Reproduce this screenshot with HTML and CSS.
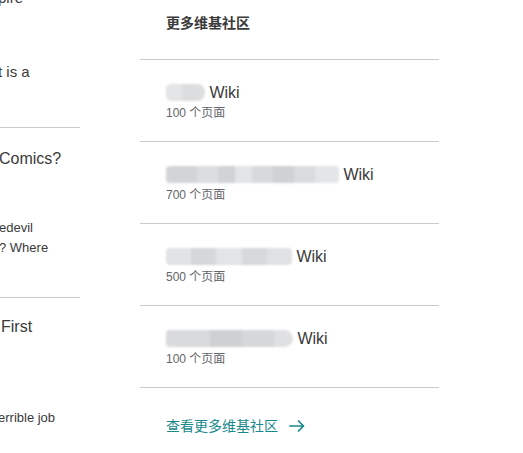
FILE: index.html
```html
<!DOCTYPE html>
<html lang="zh">
<head>
<meta charset="utf-8">
<title>更多维基社区</title>
<link rel="stylesheet" href="styles.css">
</head>
<body>
<div class="page">
  <div class="feed">
    <div class="card card-1">
      <div class="card-title first">pire</div>
      <div class="card-text gap-1">t is a</div>
    </div>
    <div class="card card-2">
      <div class="card-title">Comics?</div>
      <div class="card-desc gap-2">edevil<br>? Where</div>
    </div>
    <div class="card card-3">
      <div class="card-title">First</div>
      <div class="card-desc gap-3">errible job</div>
    </div>
  </div>

  <aside class="communities">
    <h2 class="communities-head">更多维基社区</h2>
    <ul class="wiki-list">
      <li class="wiki">
        <div class="wiki-name"><span class="blur blur-1"></span> Wiki</div>
        <div class="wiki-pages">100 个页面</div>
      </li>
      <li class="wiki">
        <div class="wiki-name"><span class="blur blur-2"></span> Wiki</div>
        <div class="wiki-pages">700 个页面</div>
      </li>
      <li class="wiki">
        <div class="wiki-name"><span class="blur blur-3"></span> Wiki</div>
        <div class="wiki-pages">500 个页面</div>
      </li>
      <li class="wiki">
        <div class="wiki-name"><span class="blur blur-4"></span> Wiki</div>
        <div class="wiki-pages">100 个页面</div>
      </li>
    </ul>
    <a class="more-link" href="#">查看更多维基社区
      <svg class="arrow" width="16" height="12" viewBox="0 0 16 12" aria-hidden="true">
        <path d="M1 6H14.5M9.5 1L14.5 6L9.5 11" fill="none" stroke="currentColor" stroke-width="1.7" stroke-linecap="round" stroke-linejoin="round"/>
      </svg>
    </a>
  </aside>
</div>
</body>
</html>
```

FILE: styles.css
```css
html, body {
  margin: 0;
  padding: 0;
  background: #ffffff;
}

body {
  font-family: "Liberation Sans", Arial, "Noto Sans CJK SC", sans-serif;
  color: #3a3a3a;
  width: 523px;
  height: 453px;
  overflow: hidden;
}

.page {
  display: flex;
  align-items: flex-start;
}

/* left feed (cut off on the left edge) */
.feed {
  width: 80px;
  flex: none;
  overflow: hidden;
  white-space: nowrap;
}

.card {
  border-bottom: 1px solid #c8ccd1;
}

.card-title {
  font-size: 16px;
  line-height: 22px;
}

.card-text {
  font-size: 15px;
  line-height: 20px;
}

.card-desc {
  font-size: 13px;
  line-height: 20px;
}

.card-1 {
  padding-bottom: 45px;
}

.card-1 .first {
  font-size: 15px;
  line-height: 20px;
  margin-top: -12px;
  margin-left: -2px;
}

.gap-1 {
  margin-top: 54px;
  margin-left: -2px;
}

.card-2 {
  padding-top: 20px;
  padding-bottom: 39px;
}

.card-2 .card-title {
  margin-left: -1px;
}

.gap-2 {
  margin-top: 48px;
  margin-left: -1px;
}

.card-3 {
  border-bottom: none;
  padding-top: 18px;
}

.card-3 .card-title {
  margin-left: 1px;
}

.gap-3 {
  margin-top: 70px;
  margin-left: -2px;
}

/* right panel */
.communities {
  width: 299px;
  margin-left: 60px;
  flex: none;
}

.communities-head {
  margin: 0;
  padding: 13px 26px 26px;
  font-size: 14px;
  line-height: 20px;
  font-weight: 700;
  color: #3a3a3a;
}

.wiki-list {
  list-style: none;
  margin: 0;
  padding: 0;
}

.wiki {
  border-top: 1px solid #c8ccd1;
  padding: 23px 26px 20px;
}

.wiki:last-child {
  border-bottom: 1px solid #c8ccd1;
}

.wiki-name {
  font-size: 16px;
  line-height: 20px;
  color: #3a3a3a;
  white-space: nowrap;
}

.wiki-pages {
  margin-top: 2px;
  font-size: 12px;
  line-height: 16px;
  color: #63666a;
}

.blur {
  display: inline-block;
  vertical-align: top;
  height: 17px;
  margin-top: 1px;
  border-radius: 4px;
  filter: blur(1px);
}

.blur-1 {
  width: 39px;
  background: linear-gradient(90deg, #e4e5e7 0 40%, #dcdddf 40% 100%);
  border-radius: 5px 8px 8px 5px;
}

.blur-2 {
  width: 173px;
  background: linear-gradient(90deg,
    #d3d4d6 0 18%, #dcdddf 18% 30%, #d2d3d5 30% 40%, #e3e4e6 40% 50%,
    #d8d9db 50% 62%, #d0d1d3 62% 74%, #dadbdd 74% 86%, #e4e5e7 86% 100%);
}

.blur-3 {
  width: 126px;
  background: linear-gradient(90deg,
    #e2e3e5 0 20%, #d6d7d9 20% 40%, #e3e4e6 40% 60%, #d7d8da 60% 80%, #e0e1e3 80% 100%);
}

.blur-4 {
  width: 127px;
  background: linear-gradient(90deg,
    #d9dadc 0 35%, #cfd0d2 35% 60%, #d6d7d9 60% 85%, #dfe0e2 85% 100%);
  border-radius: 4px 9px 9px 4px;
}

.more-link {
  display: flex;
  align-items: center;
  gap: 11px;
  margin-top: 28px;
  padding: 0 26px;
  font-size: 14px;
  line-height: 20px;
  color: #17898b;
  text-decoration: none;
}

.arrow {
  flex: none;
}
```
